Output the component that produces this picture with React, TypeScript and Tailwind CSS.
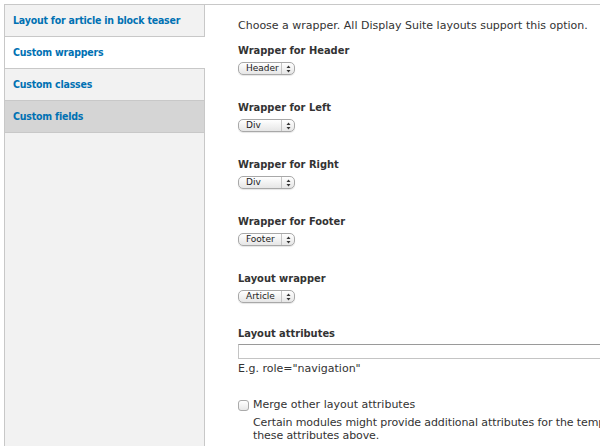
import React from "react"

const tabs = [
  { label: "Layout for article in block teaser", state: "normal" },
  { label: "Custom wrappers", state: "active" },
  { label: "Custom classes", state: "normal" },
  { label: "Custom fields", state: "hover" },
]

const wrappers = [
  { label: "Wrapper for Header", value: "Header" },
  { label: "Wrapper for Left", value: "Div" },
  { label: "Wrapper for Right", value: "Div" },
  { label: "Wrapper for Footer", value: "Footer" },
  { label: "Layout wrapper", value: "Article" },
]

function FakeSelect({ value }: { value: string }) {
  return (
    <div className="flex h-[13px] w-[57px] items-stretch rounded-[5px] border border-[#a8a8a8] bg-gradient-to-b from-white to-[#e6e6e6] shadow-[0_1px_1px_rgba(0,0,0,0.1)]">
      <span className="flex-1 pl-[7px] text-[9px] leading-[11px] text-[#222]">{value}</span>
      <span className="flex w-[13px] items-center justify-center border-l border-[#c4c4c4]">
        <svg width="5" height="8" viewBox="0 0 5 8">
          <path d="M2.5 0.5 L4.5 3 L0.5 3 Z" fill="#333" />
          <path d="M2.5 7.5 L4.5 5 L0.5 5 Z" fill="#333" />
        </svg>
      </span>
    </div>
  )
}

export default function App() {
  return (
    <div className="h-[446px] w-[600px] overflow-hidden bg-white pl-[4px] pt-[4px] font-['DejaVu_Sans',sans-serif] text-[#333]">
      <div className="flex h-full w-[700px] border-l border-t border-[#c8c8c8]">
        {/* Vertical tabs */}
        <div className="flex w-[200px] shrink-0 flex-col">
          {tabs.map((tab) => (
            <div
              key={tab.label}
              className={
                tab.state === "active"
                  ? "flex h-[32px] items-center whitespace-nowrap border-b border-[#c8c8c8] bg-white pl-[8px] font-['DejaVu_Sans_Condensed',sans-serif] text-[10.5px] font-bold tracking-[-0.2px] text-[#0071b3]"
                  : tab.state === "hover"
                    ? "flex h-[32px] items-center whitespace-nowrap border-b border-r border-[#c8c8c8] bg-[#d5d5d5] pl-[8px] font-['DejaVu_Sans_Condensed',sans-serif] text-[10.5px] font-bold tracking-[-0.2px] text-[#0071b3]"
                    : "flex h-[32px] items-center whitespace-nowrap border-b border-r border-[#c8c8c8] bg-[#f2f2f2] pl-[8px] font-['DejaVu_Sans_Condensed',sans-serif] text-[10.5px] font-bold tracking-[-0.2px] text-[#0071b3]"
              }
            >
              {tab.label}
            </div>
          ))}
          <div className="flex-1 border-r border-[#c8c8c8] bg-[#f2f2f2]" />
        </div>

        {/* Panel */}
        <div className="flex-1 pl-[33px] pt-[14px] text-[11px]">
          <p className="leading-[14px]">
            Choose a wrapper. All Display Suite layouts support this option.
          </p>
          {wrappers.map((w) => (
            <div key={w.label} className="mt-[11px] mb-[26px]">
              <div className="font-['DejaVu_Sans_Condensed',sans-serif] font-bold leading-[14px]">{w.label}</div>
              <div className="mt-[4px]">
                <FakeSelect value={w.value} />
              </div>
            </div>
          ))}
          <div className="-mt-[2px]">
            <div className="font-['DejaVu_Sans_Condensed',sans-serif] font-bold leading-[14px]">Layout attributes</div>
            <div className="mt-[3px] h-[15px] w-full border border-[#c4c4c4] border-t-[#9a9a9a] bg-white" />
            <div className="mt-[3px] leading-[14px]">E.g. role="navigation"</div>
          </div>
          <div className="mt-[22px] flex items-center gap-[4px]">
            <span className="h-[11px] w-[11px] rounded-[3px] border border-[#aaa] bg-gradient-to-b from-white to-[#e8e8e8]" />
            <span className="leading-[14px]">Merge other layout attributes</span>
          </div>
          <p className="mt-[4px] pl-[15px] leading-[13px] whitespace-nowrap tracking-[-0.1px]">
            Certain modules might provide additional attributes for the template wrapper, please merge
            <br />
            these attributes above.
          </p>
        </div>
      </div>
    </div>
  )
}
